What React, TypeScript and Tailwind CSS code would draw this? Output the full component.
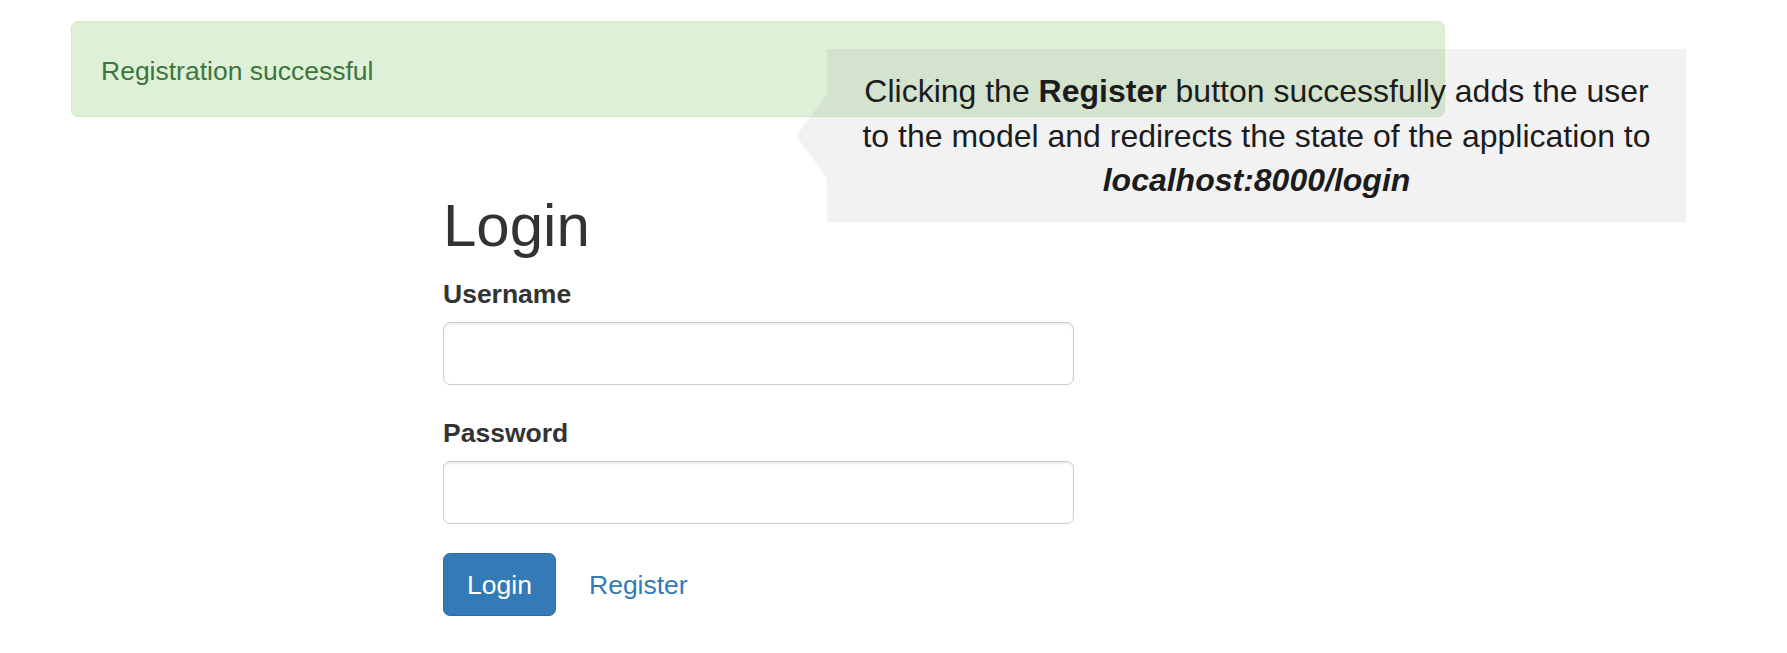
const App = () => {
	return (
		<div className="relative w-full h-[653px] bg-white overflow-hidden font-['Liberation_Sans',Arial,sans-serif]">
			<div className="ml-[71px] mt-[21px] w-[1374px] h-[96px] rounded-[7px] border border-[#d6e9c6] bg-[#dff0d8] pl-[29px] pt-[4px] flex items-center text-[26.5px] leading-[36px] text-[#3c763d]">
				Registration successful
			</div>

			<div className="ml-[443px] mt-[76px] w-[631px] text-[#333]">
				<h1 className="text-[60px] leading-[66px] font-normal">Login</h1>
				<div className="mt-[17px] text-[26.5px] leading-[36px] font-bold">Username</div>
				<div className="mt-[10px] h-[63px] border border-[#ccc] rounded-[7px] bg-white shadow-[inset_0_2px_2px_rgba(0,0,0,0.075)]"></div>
				<div className="mt-[30px] text-[26.5px] leading-[36px] font-bold">Password</div>
				<div className="mt-[10px] h-[63px] border border-[#ccc] rounded-[7px] bg-white shadow-[inset_0_2px_2px_rgba(0,0,0,0.075)]"></div>
				<div className="mt-[29px] flex items-center">
					<button className="w-[113px] h-[63px] rounded-[7px] border border-[#2e6da4] bg-[#337ab7] text-white text-[26.5px] leading-[36px]">
						Login
					</button>
					<a className="ml-[33px] text-[26.5px] leading-[36px] text-[#337ab7]">Register</a>
				</div>
			</div>

			{/* annotation callout */}
			<div className="absolute left-[827px] top-[49px] w-[859px] h-[173px] bg-[rgba(0,0,0,0.05)] pt-[20px] text-center text-[32px] leading-[44.5px] text-[#1c1c1c]">
				<div className="absolute left-[-31px] top-[45px] w-0 h-0 border-y-[42px] border-y-transparent border-r-[31px] border-r-[rgba(0,0,0,0.05)]"></div>
				Clicking the <b>Register</b> button successfully adds the user
				<br />
				to the model and redirects the state of the application to
				<br />
				<b className="italic">localhost:8000/login</b>
			</div>
		</div>
	);
};

export default App;
